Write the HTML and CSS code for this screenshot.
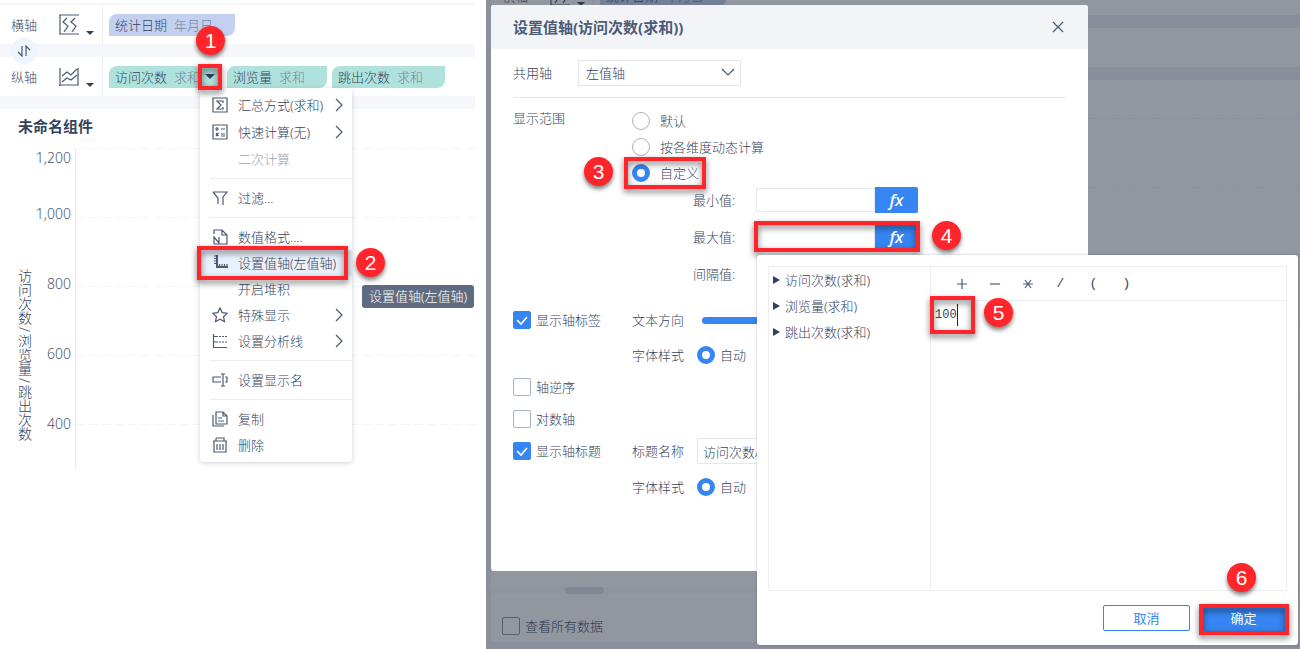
FILE: index.html
```html
<!DOCTYPE html>
<html lang="zh-CN">

	<head>
		<meta charset="UTF-8">
		<title>设置值轴</title>
		<link rel="stylesheet" href="styles.css">
	</head>

	<body>
		<!-- 左侧:组件编辑区 -->
		<div class="left">
			<div class="row">
				<div class="rowHead">
					<span>横轴</span>
					<svg class="axisIcon" viewBox="0 0 22 22"><path d="M1 1h20M1 20h20M2 1v19M9 4L5 8l5 4-4 6M17 4l-4 4 5 4-4 6"/></svg>
					<i class="caret"></i>
				</div>
				<div class="chips">
					<div class="chip blue"><span>统计日期</span><em>年月日</em></div>
				</div>
			</div>
			<div class="band">
				<button class="swap" aria-label="交换"><svg viewBox="0 0 14 12"><path d="M5 1v10L1 7M9 11V1l4 4"/></svg></button>
			</div>
			<div class="row">
				<div class="rowHead">
					<span>纵轴</span>
					<svg class="axisIcon" viewBox="0 0 22 22"><path d="M2 2v18M1 19h20M20 2v17M4 10l5-4 4 3 6-6M4 16l5-4 4 2 6-5"/></svg>
					<i class="caret"></i>
				</div>
				<div class="chips">
					<div class="chip">
						<span>访问次数</span><em>求和</em>
						<button class="chipBtn" aria-label="更多"><i class="caret"></i><i class="frame"></i><b class="num n1">1</b></button>
						<!-- 下拉菜单 -->
						<div class="menu">
							<ul class="sub">
								<li>
									<svg viewBox="0 0 16 16"><path d="M1 1h14v14H1zM11 6V4H5l4 4-4 4h6v-2"/></svg>
									<span>汇总方式(求和)</span>
									<svg class="more" viewBox="0 0 8 14"><path d="M1 1l6 6-6 6"/></svg>
								</li>
								<li>
									<svg viewBox="0 0 16 16"><path d="M1 1h14v14H1zM3 5h4M5 3v4M9 5h4M4 9l2.500 3M6.500 9L4 12M9 10h4M9 12h4"/></svg>
									<span>快速计算(无)</span>
									<svg class="more" viewBox="0 0 8 14"><path d="M1 1l6 6-6 6"/></svg>
								</li>
								<li class="off"><span>二次计算</span></li>
							</ul>
							<ul>
								<li>
									<svg viewBox="0 0 16 16"><path d="M1 2h14l-4 5v8M1 2l5 6v6"/></svg>
									<span>过滤...</span>
								</li>
							</ul>
							<ul>
								<li>
									<svg viewBox="0 0 16 16"><path d="M2 5V1h8l5 5v9H2M10 1v5h5M2 15V8l5 6V8"/></svg>
									<span>数值格式....</span>
								</li>
								<li class="current">
									<svg viewBox="0 0 16 16"><path class="thick" d="M5 0v12h11"/><path d="M2 1h3M2 3.500h3M2 6h3M2 8.500h3M7.500 9v3M10 9v3M12.500 9v3M15 9v3"/></svg>
									<span>设置值轴(左值轴)</span>
									<i class="frame"></i>
									<b class="num n2">2</b>
									<div class="tip">设置值轴(左值轴)</div>
								</li>
								<li><span>开启堆积</span></li>
								<li>
									<svg viewBox="0 0 16 16"><path d="M8 1l2.200 4.600 5 .6-3.700 3.500 1 5L8 12.300 3.500 14.700l1-5L.8 6.200l5-.6z"/></svg>
									<span>特殊显示</span>
									<svg class="more" viewBox="0 0 8 14"><path d="M1 1l6 6-6 6"/></svg>
								</li>
								<li>
									<svg viewBox="0 0 16 16"><path d="M1.500 1v14M1 14.500h14M1 9h3M1 3.500h3"/><path stroke-dasharray="2 1" d="M4 3.500h11M4 9h11"/></svg>
									<span>设置分析线</span>
									<svg class="more" viewBox="0 0 8 14"><path d="M1 1l6 6-6 6"/></svg>
								</li>
							</ul>
							<ul>
								<li>
									<svg viewBox="0 0 16 16"><path d="M9 5H1v5h8M13 5h2v5h-2M11 2v12M9 2h4M9 14h4"/></svg>
									<span>设置显示名</span>
								</li>
							</ul>
							<ul>
								<li>
									<svg viewBox="0 0 16 16"><path d="M4 1h7l4 4v8H4zM11 1v4h4M1 4v11h11M6 7h4M6 10h6"/></svg>
									<span>复制</span>
								</li>
								<li>
									<svg viewBox="0 0 16 16"><path d="M1 4h14M4 1h8v3M4 1v3M2 4v11h12V4M5 7v6M8 7v6M11 7v6"/></svg>
									<span>删除</span>
								</li>
							</ul>
						</div>
					</div>
					<div class="chip"><span>浏览量</span><em>求和</em></div>
					<div class="chip"><span>跳出次数</span><em>求和</em></div>
				</div>
			</div>
			<div class="band"></div>
			<div class="card">
				<h2>未命名组件</h2>
				<div class="chart">
					<div class="axisName">访问次数<s>/</s>浏览量<s>/</s>跳出次数</div>
					<ul class="ticks">
						<li>1,200</li>
						<li>1,000</li>
						<li>800</li>
						<li>600</li>
						<li>400</li>
					</ul>
					<div class="plot"></div>
				</div>
			</div>
		</div>

		<!-- 右侧:弹窗 -->
		<div class="right">
			<div class="back">
				<div class="row">
					<div class="rowHead">
						<span>横轴</span>
						<svg class="axisIcon" viewBox="0 0 22 22"><path d="M1 1h20M1 20h20M2 1v19M9 4L5 8l5 4-4 6M17 4l-4 4 5 4-4 6"/></svg>
						<i class="caret"></i>
					</div>
					<div class="chips">
						<div class="chip blue"><span>统计日期</span><em>年月日</em></div>
					</div>
				</div>
				<div class="band"></div>
				<div class="row"></div>
				<div class="band"></div>
				<div class="card">
					<div class="plot"></div>
					<div class="scroll"><i></i></div>
					<label class="all"><input type="checkbox">查看所有数据</label>
				</div>
			</div>
			<div class="mask"></div>

			<div class="dialog">
				<div class="title">
					<h3>设置值轴(访问次数(求和))</h3>
					<button class="close" aria-label="关闭"><svg viewBox="0 0 12 12"><path d="M1 1l10 10M11 1L1 11"/></svg></button>
				</div>
				<div class="body">
					<div class="share">
						<label for="share">共用轴</label>
						<div class="selectBox">
							<select id="share"><option>左值轴</option></select>
							<svg viewBox="0 0 14 8"><path d="M1 1l6 6 6-6"/></svg>
						</div>
					</div>
					<div class="range">
						<span class="rangeName">显示范围</span>
						<div>
							<label class="radio"><input type="radio" name="range">默认</label>
							<label class="radio"><input type="radio" name="range">按各维度动态计算</label>
							<label class="radio marked"><input type="radio" name="range" checked>自定义<i class="frame"></i><b class="num n3">3</b></label>
							<div class="values">
								<div class="value">
									<label for="min">最小值:</label>
									<div class="fxBox"><input type="text" id="min"><button>fx</button></div>
								</div>
								<div class="value">
									<label for="max">最大值:</label>
									<div class="fxBox"><input type="text" id="max"><button>fx</button><i class="frame"></i><b class="num n4">4</b></div>
								</div>
								<div class="value">
									<span>间隔值:</span>
								</div>
							</div>
						</div>
					</div>
					<div class="options">
						<div class="option first">
							<label class="check"><input type="checkbox" checked>显示轴标签</label>
							<span class="name">文本方向</span>
							<div class="slider"></div>
						</div>
						<div class="option">
							<span class="name">字体样式</span>
							<label class="auto"><input type="radio" name="font1" checked>自动</label>
						</div>
						<div class="option"><label class="check"><input type="checkbox">轴逆序</label></div>
						<div class="option"><label class="check"><input type="checkbox">对数轴</label></div>
						<div class="option last">
							<label class="check"><input type="checkbox" checked>显示轴标题</label>
							<label class="name" for="axisTitle">标题名称</label>
							<input class="text" type="text" id="axisTitle" value="访问次数/浏览量/跳出次数">
						</div>
						<div class="option">
							<span class="name">字体样式</span>
							<label class="auto"><input type="radio" name="font2" checked>自动</label>
						</div>
					</div>
				</div>
			</div>

			<!-- 公式编辑 -->
			<div class="formula">
				<div class="panel">
					<ul class="tree">
						<li>访问次数(求和)</li>
						<li>浏览量(求和)</li>
						<li>跳出次数(求和)</li>
					</ul>
					<div class="editor">
						<div class="ops">
							<button aria-label="加"><svg viewBox="0 0 12 12"><path d="M1 6h10M6 1v10"/></svg></button>
							<button aria-label="减"><svg viewBox="0 0 12 12"><path d="M1 6h10"/></svg></button>
							<button aria-label="乘"><svg viewBox="0 0 12 12"><path d="M1 6h10M3 2l6 8M9 2L3 10"/></svg></button>
							<button>/</button>
							<button>(</button>
							<button>)</button>
						</div>
						<div class="code">
							<textarea aria-label="公式">100</textarea>
							<i class="cursor"></i>
							<i class="frame"></i>
							<b class="num n5">5</b>
						</div>
					</div>
				</div>
				<div class="btns">
					<button class="cancel">取消</button>
					<button class="ok">确定<i class="frame"></i><b class="num n6">6</b></button>
				</div>
			</div>
		</div>
	</body>

</html>
```
FILE: styles.css
```css
* {
	margin: 0;
	padding: 0;
	box-sizing: border-box;
	list-style: none;
}

body {
	display: flex;
	min-height: 100vh;
	background: #fff;
	color: #35445d;
	font: 300 13px/20px "Noto Sans", "Noto Sans CJK SC", sans-serif;
}

button,
input,
select,
textarea {
	font: inherit;
	color: inherit;
}

button {
	border: 0;
	background: none;
	cursor: pointer;
}

em,
i {
	font-style: normal;
}

svg {
	display: block;
	fill: none;
	stroke: #4a5a74;
	stroke-width: 1.2;
}

/*红框和序号*/

.frame {
	position: absolute;
	border: 4px solid #ff252b;
	filter: drop-shadow(0 3px 3px rgba(0, 0, 0, .55));
	pointer-events: none;
}

.num {
	position: absolute;
	z-index: 5;
	width: 29px;
	height: 29px;
	border-radius: 50%;
	background: #ff252b;
	color: #fff;
	font: 400 21px/29px "Liberation Sans", sans-serif;
	text-align: center;
	box-shadow: 0 3px 4px rgba(0, 0, 0, .5);
}

/*左侧*/

.left {
	flex: 0 0 486px;
	padding-right: 11px;
}

.left::before {
	content: "";
	display: block;
	height: 3px;
	border-bottom: 2px solid #f5f6fa;
}

.row {
	display: flex;
	height: 39px;
}

.rowHead {
	display: flex;
	align-items: center;
	width: 103px;
	padding-left: 11px;
	border-right: 1px solid #eceef2;
}

.axisIcon {
	width: 22px;
	height: 22px;
	margin-left: 21px;
}

.caret {
	border: 4px solid transparent;
	border-top-color: #33425c;
	border-bottom: 0;
}

.rowHead .caret {
	align-self: flex-end;
	margin: 0 0 9px 6px;
}

.chipBtn .caret {
	border-width: 5px 5px 0;
}

.chips {
	display: flex;
	align-items: center;
	gap: 5px;
	padding-left: 6px;
}

.chip {
	position: relative;
	display: flex;
	gap: 7px;
	height: 22px;
	padding: 0 22px 0 6px;
	border-radius: 8px 0;
	background: #afe2dc;
	line-height: 22px;
}

.chip.blue {
	background: #c3d0f0;
}

.chip em {
	color: #77859a;
}

.chipBtn {
	position: absolute;
	z-index: 4;
	right: 0;
	top: 0;
	display: flex;
	align-items: center;
	justify-content: center;
	width: 24px;
	height: 22px;
}

.chipBtn .frame {
	inset: -2px 0;
}

.n1 {
	left: -2px;
	top: -40px;
}

.band {
	position: relative;
	height: 13px;
	background: #f6f7fb;
}

.swap {
	position: absolute;
	left: 11px;
	top: -6px;
	width: 26px;
	height: 26px;
	padding: 7px 6px;
	border-radius: 50%;
	background: #eff5fd;
}

/*菜单*/

.menu {
	position: absolute;
	z-index: 3;
	left: 91px;
	top: 22px;
	width: 152px;
	padding: 4px 0;
	border-radius: 3px;
	background: #fff;
	box-shadow: 0 1px 5px rgba(60, 75, 100, .25);
}

.menu ul + ul {
	margin-top: 6px;
	padding-top: 7px;
	background: linear-gradient(#eaecf0, #eaecf0) 10px 0 / 100% 1px no-repeat;
}

.menu .sub {
	display: grid;
	gap: 1px;
}

.menu li {
	position: relative;
	height: 26px;
	padding-left: 38px;
	line-height: 26px;
	white-space: nowrap;
}

.menu li svg {
	position: absolute;
	left: 12px;
	top: 5px;
	width: 16px;
	height: 16px;
}

.menu li .more {
	left: auto;
	right: 9px;
	top: 6px;
	width: 8px;
	height: 14px;
}

.menu .thick {
	stroke-width: 2;
}

.menu .off {
	color: #98a2b1;
}

.menu .current {
	background: #e8f0fd;
}

.menu .current .frame {
	inset: -4px 4px -4px -3px;
}

.n2 {
	left: 156px;
	top: -2px;
}

.tip {
	position: absolute;
	left: 162px;
	top: 35px;
	padding: 0 7px;
	border-radius: 3px;
	background: #5f6b80;
	color: #fff;
	line-height: 23px;
}

/*图表*/

.card h2 {
	padding: 7px 0 0 18px;
	font-size: 15px;
	font-weight: 700;
	line-height: 20px;
}

.chart {
	display: flex;
	margin-top: 12px;
}

.axisName {
	align-self: center;
	width: 34px;
	padding: 78px 0 0 14px;
	font-size: 14px;
	line-height: 20px;
	writing-mode: vertical-rl;
	white-space: nowrap;
}

.axisName s {
	margin: 2px 0;
	text-decoration: none;
}

.ticks {
	width: 41px;
	padding-right: 4px;
	color: #4d5869;
	font-size: 14px;
	text-align: right;
}

.ticks li {
	height: 70px;
}

.ticks li:first-child {
	height: 56px;
}

.plot {
	flex: 1;
	height: 320px;
	border-left: 1px solid #e6e8ec;
	background: linear-gradient(90deg, transparent 9px, #fff 9px) 0 0 / 13px 100%, repeating-linear-gradient(#f3f4f7 0 1px, transparent 1px 69px);
}

/*右侧*/

.right {
	position: relative;
	flex: 1;
	overflow: hidden;
	background: #eef1f6;
}

.back {
	margin: -24px 0 0 5px;
	background: #fff;
}

.back .card .plot {
	margin: 38px 0 0 75px;
}

.back .band {
	background: #edf1f5;
}

.scroll {
	height: 7px;
	margin-top: 149px;
	padding-left: 74px;
	background: #fafbfc;
}

.scroll i {
	display: block;
	width: 39px;
	height: 7px;
	border-radius: 4px;
	background: #dcdfe6;
}

.all {
	display: flex;
	align-items: center;
	gap: 5px;
	padding: 22px 11px 6px;
}

.all input[type="checkbox"] {
	border-color: #8792a4;
}

.mask {
	position: absolute;
	inset: 0;
	background: rgba(38, 46, 64, .5);
}

input[type="checkbox"],
input[type="radio"] {
	appearance: none;
	width: 18px;
	height: 18px;
	border: 1px solid #a9b2c0;
	border-radius: 2px;
	background: #fff;
}

input[type="radio"] {
	border-radius: 50%;
}

input[type="radio"]:checked {
	border: 5px solid #3685f2;
}

input[type="checkbox"]:checked {
	border-color: #3685f2;
	background: #3685f2 url("data:image/svg+xml,%3Csvg xmlns='http://www.w3.org/2000/svg' viewBox='0 0 16 16'%3E%3Cpath d='M3 8l4 4 6-7' fill='none' stroke='white' stroke-width='1.600'/%3E%3C/svg%3E");
}

.dialog {
	position: absolute;
	left: 5px;
	top: 5px;
	width: 597px;
	padding-bottom: 68px;
	border-radius: 3px;
	background: #fff;
}

.title {
	display: flex;
	align-items: center;
	justify-content: space-between;
	height: 44px;
	padding: 0 24px 0 22px;
	border-radius: 3px 3px 0 0;
	background: #f2f4f8;
}

.title h3 {
	color: #4c5c77;
	font-size: 15px;
	font-weight: 700;
}

.close svg {
	width: 12px;
	height: 12px;
}

.body {
	padding: 11px 22px 0;
}

.share {
	display: flex;
	align-items: center;
	padding-bottom: 11px;
	border-bottom: 1px solid #e6e8ec;
}

.share label {
	width: 65px;
}

.selectBox {
	position: relative;
}

.selectBox select {
	appearance: none;
	width: 163px;
	height: 26px;
	padding-left: 7px;
	border: 1px solid #e4e6ea;
	background: #fff;
}

.selectBox svg {
	position: absolute;
	right: 6px;
	top: 8px;
	width: 14px;
	height: 8px;
}

.range {
	display: flex;
	padding-top: 10px;
}

.rangeName {
	width: 119px;
}

.radio {
	position: relative;
	display: flex;
	align-items: center;
	gap: 10px;
	height: 26px;
}

.marked {
	width: 70px;
}

.marked .frame {
	inset: -3px -4px -3px -8px;
}

.n3 {
	left: -48px;
	top: -3px;
}

.values {
	display: grid;
	gap: 11px;
	padding: 1px 0 0 61px;
}

.value {
	display: flex;
	align-items: center;
	height: 26px;
}

.value label {
	width: 63px;
}

.fxBox {
	position: relative;
	display: flex;
	align-items: center;
}

.fxBox input {
	width: 119px;
	height: 24px;
	border: 1px solid #e6e8ec;
}

.fxBox button {
	width: 43px;
	height: 26px;
	border-radius: 0 2px 2px 0;
	background: #3685f2;
	color: #fff;
	font: italic 500 17px/24px "Noto Sans", sans-serif;
}

.fxBox .frame {
	inset: -3px -2px -2px;
}

.n4 {
	right: -43px;
	top: -3px;
}

.options {
	padding-top: 16px;
}

.option {
	display: grid;
	grid-template-columns: 119px 65px 1fr;
	align-items: center;
	height: 32px;
}

.option.first {
	height: 34px;
	margin-bottom: 2px;
}

.option.last {
	margin-bottom: 4px;
}

.check {
	display: flex;
	align-items: center;
	gap: 5px;
}

.option .name {
	grid-column: 2;
}

.auto {
	display: flex;
	align-items: center;
	gap: 5px;
}

.slider {
	height: 7px;
	margin-left: 5px;
	border-radius: 4px;
	background: #3685f2;
}

.option .text {
	height: 26px;
	padding-left: 5px;
	border: 1px solid #e4e6ea;
}

/*公式编辑*/

.formula {
	position: absolute;
	left: 271px;
	right: 2px;
	top: 255px;
	padding: 11px 11px 14px;
	border-radius: 3px;
	background: #fff;
	box-shadow: 0 0 3px rgba(50, 65, 90, .35);
}

.panel {
	display: flex;
	height: 325px;
	border: 1px solid #eceef1;
}

.tree {
	width: 162px;
	border-right: 1px solid #eceef1;
}

.tree li {
	display: flex;
	align-items: center;
	gap: 5px;
	height: 26px;
	padding-left: 4px;
}

.tree li::before {
	content: "";
	border: 4px solid transparent;
	border-left: 7px solid #33425c;
	border-right: 0;
}

.editor {
	flex: 1;
}

.ops {
	display: flex;
	height: 34px;
	padding-left: 14px;
	border-bottom: 1px solid #eceef1;
}

.ops button {
	width: 33px;
	font-family: "Liberation Mono", monospace;
	text-align: center;
}

.ops svg {
	width: 12px;
	height: 12px;
	margin: 0 auto;
}

.code {
	position: relative;
}

.code textarea {
	display: block;
	width: 100%;
	height: 100px;
	padding: 4px;
	border: 0;
	outline: 0;
	resize: none;
	font: 12px/20px "Liberation Mono", monospace;
}

.cursor {
	position: absolute;
	left: 26px;
	top: 3px;
	width: 1px;
	height: 22px;
	background: #222;
}

.code .frame {
	left: -1px;
	top: -5px;
	width: 45px;
	height: 38px;
}

.n5 {
	left: 53px;
	top: -3px;
}

.btns {
	display: flex;
	justify-content: flex-end;
	gap: 10px;
	margin-top: 14px;
}

.btns button {
	position: relative;
	width: 87px;
	height: 26px;
	border: 1px solid #3685f2;
	border-radius: 2px;
	color: #3685f2;
	font-weight: 400;
}

.btns .ok {
	background: #3685f2;
	color: #fff;
}

.ok .frame {
	inset: -2px -3px -5px -2px;
}

.n6 {
	left: 26px;
	top: -43px;
}
```
